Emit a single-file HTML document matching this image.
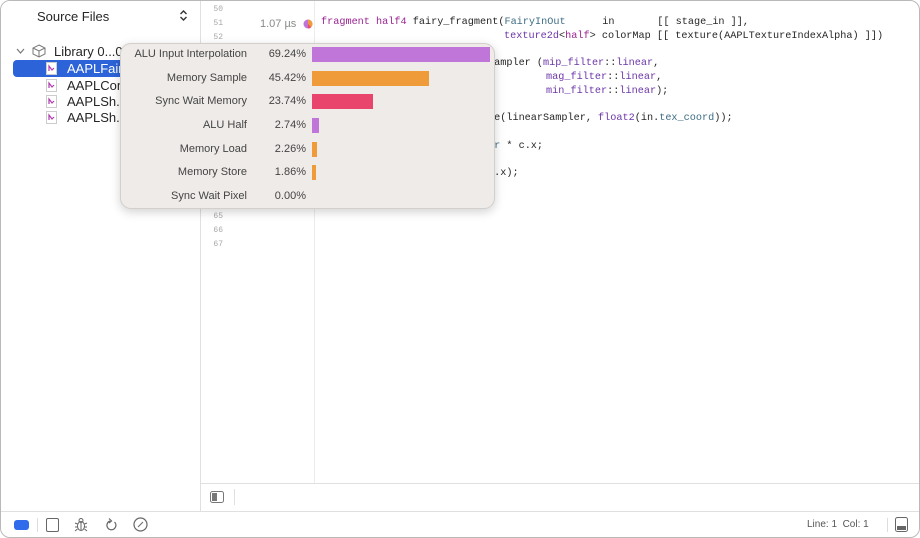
<!DOCTYPE html>
<html><head><style>
*{margin:0;padding:0;box-sizing:border-box}
body{width:920px;height:538px;background:#fff;font-family:"Liberation Sans",sans-serif;overflow:hidden;position:relative}
.win{position:absolute;left:0;top:0;width:920px;height:538px;border:1px solid #b9b9b9;border-radius:10px;overflow:hidden;background:#fff}
.abs{position:absolute}
.side{left:0;top:0;width:200px;height:510px;border-right:1px solid #e0e0e0;background:#fff}
.t13{font-size:13px;color:#262626;white-space:nowrap}
.ln{position:absolute;left:200px;width:22px;text-align:right;font-family:"Liberation Mono",monospace;font-size:8px;color:#a8a8a8}
.code{position:absolute;font-family:"Liberation Mono",monospace;font-size:10.2px;color:#262626;white-space:pre}
.k{color:#9b2393}.ty{color:#5d3cbb}.p{color:#3e6d84}.pu{color:#6c36a9}
.pop{left:119px;top:42px;width:375px;height:166px;background:#efebe8;border:1px solid #d2cfcc;border-radius:11px;box-shadow:0 3px 10px rgba(0,0,0,.18)}
.row{position:absolute;left:0;width:375px;height:16px;font-size:11px;color:#444}
.row .l{position:absolute;right:249px;top:1px;white-space:nowrap}
.row .v{position:absolute;right:190px;top:1px}
.row .b{position:absolute;left:191px;top:0;height:15px}
</style></head><body><div class="win">
<div class="abs side">
<div class="abs t13" style="left:36px;top:8px">Source Files</div>
<svg class="abs" style="left:178px;top:8px" width="9" height="13" viewBox="0 0 9 13"><path d="M1.5 5L4.5 2L7.5 5M1.5 8L4.5 11L7.5 8" fill="none" stroke="#333" stroke-width="1.4"/></svg>
<svg class="abs" style="left:15px;top:46px" width="9" height="8"><path d="M1 2L4.5 6L8 2" fill="none" stroke="#777" stroke-width="1.2"/></svg>
<svg class="abs" style="left:31px;top:43px" width="14" height="14" viewBox="0 0 14 14"><path d="M7 1L13 4V10L7 13L1 10V4Z M1 4L7 7L13 4 M7 7V13" fill="none" stroke="#777" stroke-width="1"/></svg>
<div class="abs t13" style="left:53px;top:43px">Library 0...0</div>
<div class="abs" style="left:12px;top:59px;width:190px;height:17px;background:#2c63d8;border-radius:4px"></div>
<div class="abs t13" style="left:66px;top:60px;color:#fff">AAPLFairy</div>
<div class="abs t13" style="left:66px;top:77px">AAPLCom</div>
<div class="abs t13" style="left:66px;top:93px">AAPLSh...</div>
<div class="abs t13" style="left:66px;top:109px">AAPLSh...</div>
<svg class="abs" style="left:45px;top:61px" width="11" height="13"><rect x=".5" y=".5" width="10" height="12" fill="#fff" stroke="#ccc"/><path d="M3 9V4L6 8L8 6" fill="none" stroke="#b03ab0" stroke-width="1.2"/></svg>
<svg class="abs" style="left:45px;top:78px" width="11" height="13"><rect x=".5" y=".5" width="10" height="12" fill="#fff" stroke="#ccc"/><path d="M3 9V4L6 8L8 6" fill="none" stroke="#b03ab0" stroke-width="1.2"/></svg>
<svg class="abs" style="left:45px;top:94px" width="11" height="13"><rect x=".5" y=".5" width="10" height="12" fill="#fff" stroke="#ccc"/><path d="M3 9V4L6 8L8 6" fill="none" stroke="#b03ab0" stroke-width="1.2"/></svg>
<svg class="abs" style="left:45px;top:110px" width="11" height="13"><rect x=".5" y=".5" width="10" height="12" fill="#fff" stroke="#ccc"/><path d="M3 9V4L6 8L8 6" fill="none" stroke="#b03ab0" stroke-width="1.2"/></svg>
</div>
<div class="abs" style="left:313px;top:0;width:1px;height:482px;background:#ececec"></div>
<div class="ln" style="top:4px">50</div><div class="ln" style="top:18px">51</div><div class="ln" style="top:32px">52</div>
<div class="ln" style="top:211px">65</div><div class="ln" style="top:225px">66</div><div class="ln" style="top:239px">67</div>
<div class="abs" style="left:259px;top:17px;font-size:11px;color:#8a8a8a">1.07 µs</div>
<svg class="abs" style="left:302px;top:18px" width="10" height="10"><circle cx="5" cy="5" r="4.5" fill="#c074d8"/><path d="M5 5V.5A4.5 4.5 0 0 1 9.5 5A4.5 4.5 0 0 1 5 9.5Z" fill="#f09a3a"/><path d="M5 5L8.2 8.2A4.5 4.5 0 0 1 5 9.5Z" fill="#e84a6c"/></svg>
<div class="code" style="left:320px;top:16px"><span class="k">fragment</span> <span class="k">half4</span> fairy_fragment(<span class="p">FairyInOut</span>      in       [[ stage_in ]],</div>
<div class="code" style="left:503px;top:30px"><span class="pu">texture2d</span>&lt;<span class="k">half</span>&gt; colorMap [[ texture(AAPLTextureIndexAlpha) ]])</div>
<div class="code" style="left:487px;top:57px">Sampler (<span class="pu">mip_filter</span>::<span class="pu">linear</span>,</div>
<div class="code" style="left:545px;top:71px"><span class="pu">mag_filter</span>::<span class="pu">linear</span>,</div>
<div class="code" style="left:545px;top:85px"><span class="pu">min_filter</span>::<span class="pu">linear</span>);</div>
<div class="code" style="left:487px;top:112px">le(linearSampler, <span class="pu">float2</span>(in.<span class="p">tex_coord</span>));</div>
<div class="code" style="left:487px;top:140px"><span class="p">or</span> * c.x;</div>
<div class="code" style="left:487px;top:167px">c.x);</div>
<div class="abs pop">
<div class="row" style="top:3px"><span class="l">ALU Input Interpolation</span><span class="v">69.24%</span><span class="b" style="width:178px;background:#c075d9"></span></div>
<div class="row" style="top:27px"><span class="l">Memory Sample</span><span class="v">45.42%</span><span class="b" style="width:117px;background:#f09b3a"></span></div>
<div class="row" style="top:50px"><span class="l">Sync Wait Memory</span><span class="v">23.74%</span><span class="b" style="width:61px;background:#e9456c"></span></div>
<div class="row" style="top:74px"><span class="l">ALU Half</span><span class="v">2.74%</span><span class="b" style="width:7px;background:#c075d9"></span></div>
<div class="row" style="top:98px"><span class="l">Memory Load</span><span class="v">2.26%</span><span class="b" style="width:5px;background:#f09b3a"></span></div>
<div class="row" style="top:121px"><span class="l">Memory Store</span><span class="v">1.86%</span><span class="b" style="width:4px;background:#f09b3a"></span></div>
<div class="row" style="top:145px"><span class="l">Sync Wait Pixel</span><span class="v">0.00%</span></div>
</div>
<div class="abs" style="left:200px;top:482px;width:720px;height:1px;background:#e0e0e0"></div>
<svg class="abs" style="left:209px;top:490px" width="14" height="12"><rect x=".5" y=".5" width="13" height="11" rx="2" fill="none" stroke="#777"/><rect x="2" y="2" width="5" height="8" fill="#777"/></svg>
<div class="abs" style="left:233px;top:488px;width:1px;height:16px;background:#e0e0e0"></div>
<div class="abs" style="left:0;top:510px;width:920px;height:1px;background:#e0e0e0"></div>
<div class="abs" style="left:13px;top:519px;width:15px;height:10px;background:#2f6bea;border-radius:3px"></div>
<div class="abs" style="left:36px;top:517px;width:1px;height:14px;background:#ddd"></div>
<div class="abs" style="left:45px;top:517px;width:13px;height:14px;border:1px solid #666;border-radius:2px"></div>
<svg class="abs" style="left:73px;top:516px" width="14" height="15" viewBox="0 0 14 15"><ellipse cx="7" cy="9" rx="3.5" ry="4.5" fill="none" stroke="#666"/><circle cx="7" cy="3.5" r="2" fill="none" stroke="#666"/><path d="M1 6L3.5 7M1 10H3.5M1 14L3.5 12M13 6L10.5 7M13 10H10.5M13 14L10.5 12M7 5V13" stroke="#666" fill="none"/></svg>
<svg class="abs" style="left:104px;top:516px" width="13" height="15"><path d="M9.5 5A4.5 4.5 0 1 1 5 4" fill="none" stroke="#666" stroke-width="1.2"/><path d="M4 1.5L6.5 4L4 6" fill="none" stroke="#666" stroke-width="1.2"/></svg>
<svg class="abs" style="left:132px;top:516px" width="15" height="15"><circle cx="7.5" cy="7.5" r="6.5" fill="none" stroke="#666" stroke-width="1.2"/><path d="M10 5L6.5 8.5L5 10L8.5 6.5Z" fill="none" stroke="#666"/></svg>
<div class="abs" style="left:806px;top:518px;font-size:10px;color:#555">Line: 1&nbsp;&nbsp;Col: 1</div>
<div class="abs" style="left:886px;top:517px;width:1px;height:14px;background:#ddd"></div>
<svg class="abs" style="left:894px;top:516px" width="13" height="15"><rect x=".5" y=".5" width="12" height="14" rx="2" fill="none" stroke="#666"/><rect x="2" y="9" width="9" height="4" fill="#666"/></svg>
</div></body></html>
